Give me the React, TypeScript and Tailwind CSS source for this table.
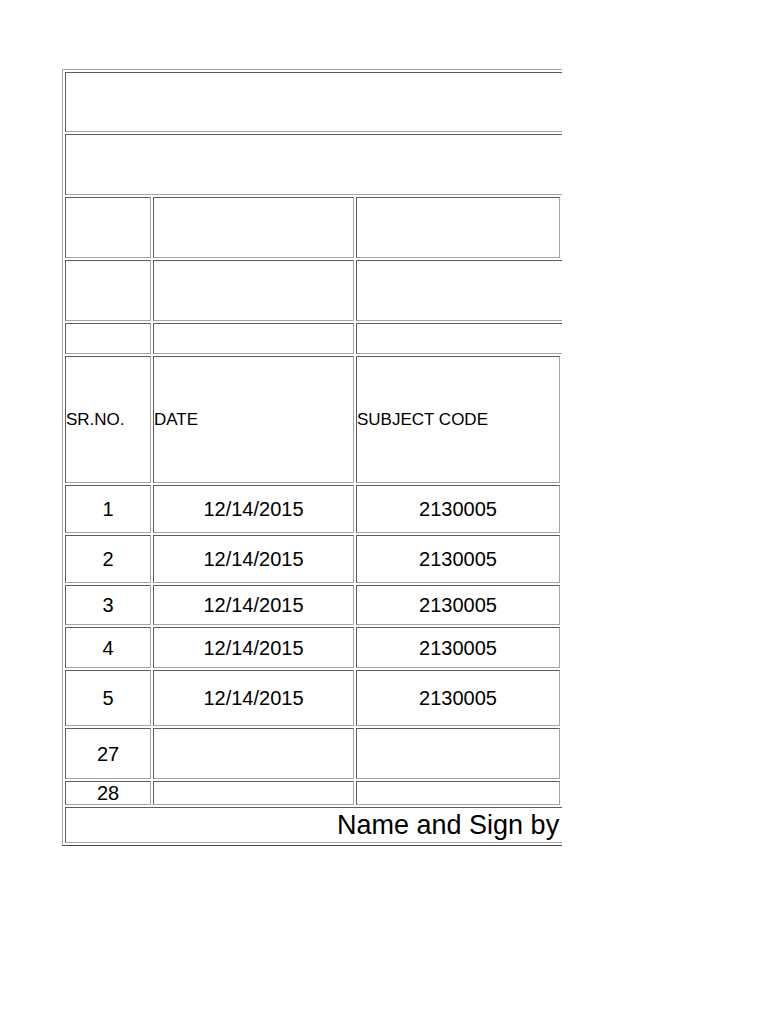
import React from "react";

const cell =
  "p-0 border border-solid border-t-[#5c5c5c] border-l-[#5c5c5c] border-r-[#a4a4a4] border-b-[#a4a4a4]";

const rows = [
  { no: "1", date: "12/14/2015", code: "2130005", h: "h-[48px]" },
  { no: "2", date: "12/14/2015", code: "2130005", h: "h-[48px]" },
  { no: "3", date: "12/14/2015", code: "2130005", h: "h-[40px]" },
  { no: "4", date: "12/14/2015", code: "2130005", h: "h-[41px]" },
  { no: "5", date: "12/14/2015", code: "2130005", h: "h-[56px]" },
  { no: "27", date: "", code: "", h: "h-[51px]" },
  { no: "28", date: "", code: "", h: "h-[24px]" },
];

export default function App() {
  return (
    <div
      className="min-h-screen bg-white pt-[69px] pl-[62px] text-black"
      style={{ fontFamily: '"Liberation Sans", Arial, sans-serif' }}
    >
      <div className="w-[500px] overflow-hidden">
        <table className="table-fixed w-[803px] border-separate border-spacing-[2px] border border-solid border-t-[#a4a4a4] border-l-[#a4a4a4] border-r-[#4a4a4a] border-b-[#4a4a4a]">
          <colgroup>
            <col className="w-[86px]" />
            <col className="w-[201px]" />
            <col className="w-[204px]" />
            <col />
          </colgroup>
          <tbody>
            <tr>
              <td colSpan={4} className={`${cell} h-[60px]`}></td>
            </tr>
            <tr>
              <td colSpan={4} className={`${cell} h-[61px]`}></td>
            </tr>
            <tr>
              <td className={`${cell} h-[61px]`}></td>
              <td className={cell}></td>
              <td className={cell}></td>
              <td className={cell}></td>
            </tr>
            <tr>
              <td className={`${cell} h-[61px]`}></td>
              <td className={cell}></td>
              <td colSpan={2} className={cell}></td>
            </tr>
            <tr>
              <td className={`${cell} h-[31px]`}></td>
              <td className={cell}></td>
              <td colSpan={2} className={cell}></td>
            </tr>
            <tr className="text-[17px] text-left">
              <td className={`${cell} h-[127px]`}>SR.NO.</td>
              <td className={cell}>DATE</td>
              <td className={cell}>SUBJECT CODE</td>
              <td className={cell}></td>
            </tr>
            {rows.map((r) => (
              <tr key={r.no} className="text-[20px] text-center leading-none">
                <td className={`${cell} ${r.h}`}>{r.no}</td>
                <td className={cell}>{r.date}</td>
                <td className={cell}>{r.code}</td>
                <td className={cell}></td>
              </tr>
            ))}
            <tr>
              <td
                colSpan={4}
                className={`${cell} h-[36px] pl-[271px] text-left text-[27px] leading-none whitespace-nowrap`}
              >
                Name and Sign by
              </td>
            </tr>
          </tbody>
        </table>
      </div>
    </div>
  );
}
